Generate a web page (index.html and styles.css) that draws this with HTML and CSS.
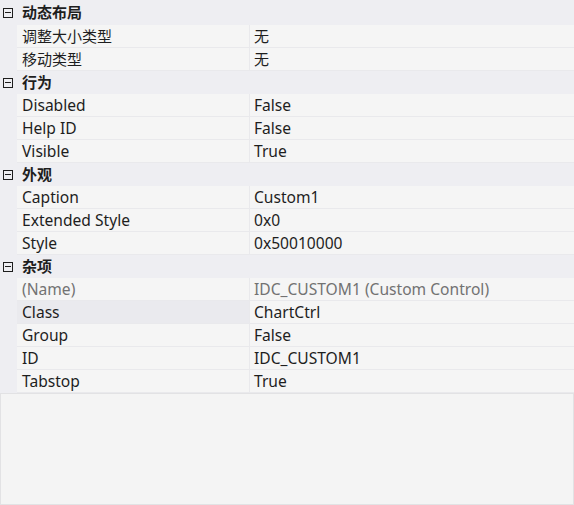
FILE: index.html
```html
<!DOCTYPE html>
<html lang="zh">
<head>
<meta charset="utf-8">
<title>Properties</title>
<link rel="stylesheet" href="styles.css">
</head>
<body>
<div class="grid">
  <div class="cat first"><span class="tog"></span><span class="cat-label">动态布局</span></div>
  <div class="row cjk"><div class="name">调整大小类型</div><div class="val">无</div></div>
  <div class="row cjk"><div class="name">移动类型</div><div class="val">无</div></div>

  <div class="cat"><span class="tog"></span><span class="cat-label">行为</span></div>
  <div class="row"><div class="name">Disabled</div><div class="val">False</div></div>
  <div class="row"><div class="name">Help ID</div><div class="val">False</div></div>
  <div class="row"><div class="name">Visible</div><div class="val">True</div></div>

  <div class="cat"><span class="tog"></span><span class="cat-label">外观</span></div>
  <div class="row"><div class="name">Caption</div><div class="val">Custom1</div></div>
  <div class="row"><div class="name">Extended Style</div><div class="val">0x0</div></div>
  <div class="row"><div class="name">Style</div><div class="val">0x50010000</div></div>

  <div class="cat"><span class="tog"></span><span class="cat-label">杂项</span></div>
  <div class="row ro"><div class="name">(Name)</div><div class="val">IDC_CUSTOM1 (Custom Control)</div></div>
  <div class="row sel"><div class="name">Class</div><div class="val">ChartCtrl</div></div>
  <div class="row"><div class="name">Group</div><div class="val">False</div></div>
  <div class="row"><div class="name">ID</div><div class="val">IDC_CUSTOM1</div></div>
  <div class="row"><div class="name">Tabstop</div><div class="val">True</div></div>
</div>
<div class="desc"></div>
</body>
</html>
```
FILE: styles.css
```css
html, body {
  margin: 0;
  padding: 0;
}
body {
  width: 574px;
  height: 505px;
  background: #f5f5f5;
  font-family: "Noto Sans", "Noto Sans CJK SC", sans-serif;
  font-size: 15px;
  color: #1e1e1e;
  overflow: hidden;
}
.grid {
  background: #eeeef2;
}
.cat {
  display: flex;
  align-items: center;
  height: 23px;
}
.cat.first {
  height: 25px;
}
.tog {
  box-sizing: border-box;
  width: 10px;
  height: 10px;
  margin-left: 3px;
  margin-right: 9px;
  border: 1px solid #1e1e1e;
  position: relative;
  flex: none;
}
.tog::after {
  content: "";
  position: absolute;
  left: 1px;
  right: 1px;
  top: 3px;
  height: 1px;
  background: #1e1e1e;
}
.cat-label {
  font-weight: bold;
  line-height: 23px;
}
.row {
  display: flex;
  margin-left: 17px;
  height: 23px;
  box-sizing: border-box;
  border-bottom: 1px solid #e9e9ec;
  background: #f5f5f5;
  font-size: 15.6px;
}
.row.cjk {
  font-size: 15px;
}
.name {
  box-sizing: border-box;
  width: 233px;
  padding-left: 5px;
  line-height: 22px;
  border-right: 1px solid #e9e9ec;
  white-space: nowrap;
}
.val {
  flex: 1;
  padding-left: 4px;
  line-height: 22px;
  white-space: nowrap;
}
.row.ro .name,
.row.ro .val {
  color: #727272;
}
.row.sel .name {
  background: #eaeaee;
}
.desc {
  box-sizing: border-box;
  height: 112px;
  border: 1px solid #e2e2e4;
  background: #f4f4f4;
}
```
